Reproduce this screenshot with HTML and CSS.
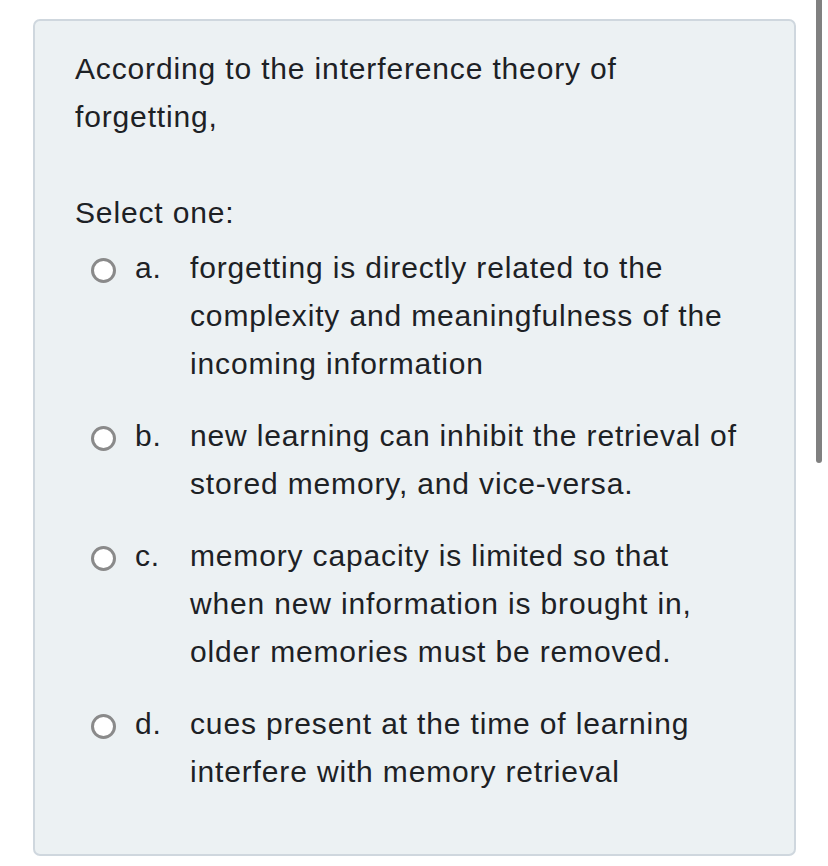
FILE: index.html
```html
<!DOCTYPE html>
<html lang="en">
<head>
<meta charset="utf-8">
<title>Quiz question</title>
<link rel="stylesheet" href="styles.css">
</head>
<body>
<div class="page">
  <div class="card">
    <div class="qtext">According to the interference theory of forgetting,</div>
    <div class="prompt">Select one:</div>
    <div class="answers">
      <div class="option">
        <span class="radio"></span>
        <span class="letter">a.</span>
        <span class="text">forgetting is directly related to the complexity and meaningfulness of the incoming information</span>
      </div>
      <div class="option">
        <span class="radio"></span>
        <span class="letter">b.</span>
        <span class="text">new learning can inhibit the retrieval of stored memory, and vice-versa.</span>
      </div>
      <div class="option">
        <span class="radio"></span>
        <span class="letter">c.</span>
        <span class="text">memory capacity is limited so that when new information is brought in, older memories must be removed.</span>
      </div>
      <div class="option">
        <span class="radio"></span>
        <span class="letter">d.</span>
        <span class="text">cues present at the time of learning interfere with memory retrieval</span>
      </div>
    </div>
  </div>
  <div class="scrollbar"></div>
</div>
</body>
</html>
```

FILE: styles.css
```css
html, body {
  margin: 0;
  padding: 0;
  background: #ffffff;
}
.page {
  position: relative;
  width: 828px;
  height: 866px;
  padding: 19px 0 0 33px;
  box-sizing: border-box;
  font-family: "Liberation Sans", Arial, Helvetica, sans-serif;
  font-size: 30px;
  letter-spacing: 0.85px;
  line-height: 48px;
  color: #1d2125;
}
.card {
  width: 763px;
  height: 837px;
  box-sizing: border-box;
  background: #ecf1f3;
  border: 2px solid #cfd7de;
  border-radius: 7px;
  padding: 24px 52px 0 40px;
}
.qtext {
  margin-bottom: 48px;
}
.prompt {
  margin-bottom: 7px;
}
.answers {
  display: flex;
  flex-direction: column;
  gap: 24px;
}
.option {
  display: flex;
  align-items: flex-start;
}
.radio {
  flex: none;
  width: 25px;
  height: 25px;
  box-sizing: border-box;
  border: 3px solid #8a8a8a;
  border-radius: 50%;
  background: #ffffff;
  margin: 14px 0 0 16px;
}
.letter {
  flex: none;
  width: 55px;
  margin-left: 19px;
}
.text {
  flex: 1;
}
.scrollbar {
  position: absolute;
  left: 816px;
  top: 0;
  width: 6px;
  height: 463px;
  border-radius: 0 0 3px 3px;
  background: #808080;
}
```
